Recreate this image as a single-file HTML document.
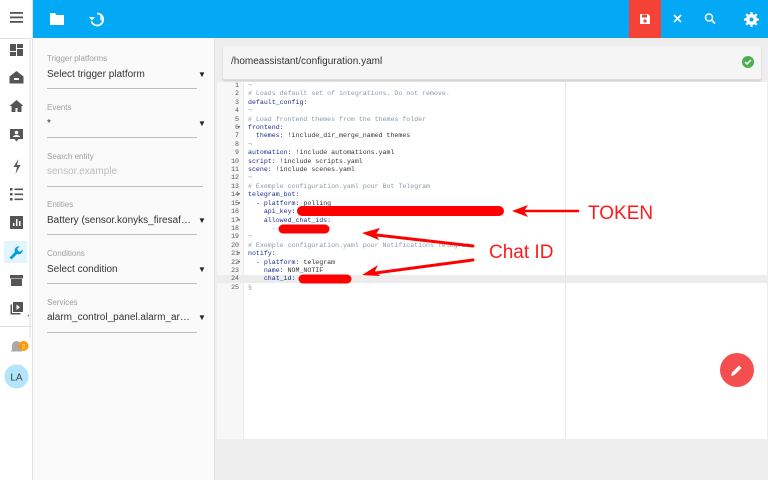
<!DOCTYPE html>
<html><head><style>
*{margin:0;padding:0;box-sizing:border-box}
body{width:768px;height:480px;overflow:hidden;background:#eeeeee;font-family:"Liberation Sans",sans-serif;position:relative}
.abs{position:absolute}
#side{left:0;top:0;width:33px;height:480px;background:#fff;border-right:1px solid #e0e0e0}
#hdr{left:33px;top:0;width:735px;height:38px;background:#03a9f4}
#left{left:33px;top:38px;width:182px;height:442px;background:#fafafa;border-right:1px solid #e4e4e4}
.lbl{position:absolute;left:47px;font-size:8px;color:#9e9e9e}
.val{position:absolute;left:47px;font-size:10px;color:#333;width:148px;white-space:nowrap;overflow:hidden;text-overflow:ellipsis}
.ul{position:absolute;left:47px;width:150px;height:1px;background:#bdbdbd}
.dd{position:absolute;left:198px;font-size:8px;color:#222}
#path{left:223px;top:46px;width:538px;height:34px;background:#f5f5f5;border-bottom:1px solid #ddd;box-shadow:0 1px 2px rgba(0,0,0,.15)}
#code{left:217px;top:82px;width:550px;height:357px;background:#fff}
#gut{left:217px;top:82px;width:27px;height:357px;background:#f7f7f7;border-right:1px solid #ececec}
.ln{position:absolute;font-family:"Liberation Mono",monospace;font-size:6.6px;line-height:8.4px;white-space:pre}
.c{color:#8a9aa8}.k{color:#1a2d8c}.v{color:#333}
</style></head><body>
<div id="side" class="abs"></div>
<div class="abs" style="left:0;top:38px;width:33px;height:1px;background:#e0e0e0"></div>
<svg class="abs" style="left:0;top:0" width="33" height="480" fill="#555">
<rect x="10" y="12" width="13" height="1.8"/><rect x="10" y="16.5" width="13" height="1.8"/><rect x="10" y="21" width="13" height="1.8"/>
<path d="M10 44h6v7h-6zM17 44h6v4h-6zM17 49h6v7h-6zM10 52h6v4h-6z"/>
<path d="M16.5 71l7 5.5v7h-14v-7z"/><rect x="14" y="78" width="5" height="2" fill="#fff"/>
<path d="M16.5 100l7 6h-2v6h-4v-4h-2v4h-4v-6h-2z"/>
<path d="M10 129h13v10h-4.5l-2 2.5-2-2.5h-4.5z"/><circle cx="16.5" cy="132.5" r="1.8" fill="#fff"/><path d="M13 137a3.5 2 0 0 1 7 0z" fill="#fff"/>
<path d="M18.5 159l-5 8h3.5l-1.5 7 5-9h-3.5z"/>
<path d="M10 188h2.5v2.5h-2.5zM14.5 188.5h8.5v1.6h-8.5zM10 193h2.5v2.5h-2.5zM14.5 193.5h8.5v1.6h-8.5zM10 198h2.5v2.5h-2.5zM14.5 198.5h8.5v1.6h-8.5z"/>
<path d="M10 216h13v13h-13z"/><path d="M13 226v-3h1.5v3zM16 226v-7h1.5v7zM19 226v-5h1.5v5z" fill="#fff"/>
<rect x="4" y="241" width="23" height="22" fill="#e1f5fe"/>
<path d="M11.5 259.5l5.5-5.5a4 4 0 0 0 5.5-4.5l-2.3 2.3-2.2-.8-.8-2.2 2.3-2.3a4 4 0 0 0-4.5 5.5l-5.5 5.5z" fill="#039be5"/>
<path d="M10 275h13v3.5h-13zM11 279h11v7h-11z"/>
<path d="M13 302h10v10h-10zM10.5 304.5v10h10v-1.5h-8.5v-8.5z"/><path d="M16.5 304.5v5.5l3.5-2.7z" fill="#fff"/>
<path d="M28 315l1.5 1.5 1.5-1.5" stroke="#555" stroke-width="1" fill="none"/>
<rect x="0" y="326" width="33" height="1" fill="#e0e0e0"/>
<path d="M16.5 341a4.5 4.5 0 0 1 4.5 4.5v4.5l1.5 1.5h-12l1.5-1.5v-4.5a4.5 4.5 0 0 1 4.5-4.5z" fill="#aaa"/>
<circle cx="23.5" cy="346" r="5" fill="#ff9800"/>
<text x="23.5" y="348.5" font-size="6" fill="#fff" text-anchor="middle" font-family="Liberation Sans">2</text>
<circle cx="16.5" cy="376.5" r="12" fill="#b3e5fc"/>
<text x="16.5" y="380.5" font-size="10" fill="#444" text-anchor="middle" font-family="Liberation Sans">LA</text>
</svg>
<div class="abs" style="left:29px;top:38px;width:2px;height:300px;background:#e8eef3"></div>
<div id="hdr" class="abs"></div>
<svg class="abs" style="left:33px;top:0" width="735" height="38" fill="#fff">
<path d="M17 13h5l1.5 2h7.5v10h-14z"/>
<path d="M64 13.5a6 6 0 1 1-5.5 8" stroke="#fff" stroke-width="1.8" fill="none"/><path d="M56 17l3 3.5 3-3.5z"/><path d="M68 15.5v4l2.5 1.5" stroke="#fff" stroke-width="1.3" fill="none"/>
<rect x="596" y="0" width="32" height="38" fill="#f44336"/>
<path d="M607 14h8l2 2v8h-10z"/><rect x="609" y="14.5" width="5" height="3" fill="#f44336"/><circle cx="612" cy="21" r="1.6" fill="#f44336"/>
<path d="M641 15l7 7M648 15l-7 7" stroke="#fff" stroke-width="1.6"/>
<circle cx="676" cy="17.5" r="3.5" stroke="#fff" stroke-width="1.5" fill="none"/><path d="M678.5 20l3.5 3.5" stroke="#fff" stroke-width="1.8"/>
<circle cx="718.5" cy="19.5" r="5.5"/>
<path d="M718.5 12v15M711 19.5h15M713.2 14.2l10.6 10.6M723.8 14.2l-10.6 10.6" stroke="#fff" stroke-width="2.2"/>
<circle cx="718.5" cy="19.5" r="2" fill="#03a9f4"/>
</svg>
<div id="left" class="abs"></div>
<div class="lbl" style="top:54px">Trigger platforms</div>
<div class="val" style="top:69px">Select trigger platform</div><div class="dd" style="top:70px">▼</div>
<div class="ul" style="top:88px"></div>
<div class="lbl" style="top:103px">Events</div>
<div class="val" style="top:118px">*</div><div class="dd" style="top:119px">▼</div>
<div class="ul" style="top:137px"></div>
<div class="lbl" style="top:152px">Search entity</div>
<div class="val" style="top:166px;color:#bbb">sensor.example</div>
<div class="ul" style="top:186px;width:156px"></div>
<div class="lbl" style="top:200px">Entities</div>
<div class="val" style="top:215px">Battery (sensor.konyks_firesafe_2_battery)</div><div class="dd" style="top:216px">▼</div>
<div class="ul" style="top:234px"></div>
<div class="lbl" style="top:249px">Conditions</div>
<div class="val" style="top:264px">Select condition</div><div class="dd" style="top:265px">▼</div>
<div class="ul" style="top:283px"></div>
<div class="lbl" style="top:298px">Services</div>
<div class="val" style="top:312px">alarm_control_panel.alarm_arm_away</div><div class="dd" style="top:313px">▼</div>
<div class="ul" style="top:332px"></div>
<div id="path" class="abs"></div>
<div class="abs" style="left:231px;top:56px;font-size:10px;color:#333">/homeassistant/configuration.yaml</div>
<svg class="abs" style="left:741px;top:55px" width="14" height="14"><circle cx="7" cy="7" r="6" fill="#4caf50"/><path d="M4 7l2 2 4-4" stroke="#fff" stroke-width="1.5" fill="none"/></svg>
<div id="code" class="abs"></div>
<div id="gut" class="abs"></div>
<div class="abs" style="left:217px;top:275px;width:551px;height:8px;background:#ececec"></div>
<div class="abs" style="left:565px;top:82px;width:1px;height:357px;background:#e6e6e6"></div>
<div class="ln" style="left:219px;top:82px;width:20px;text-align:right;color:#555">1
2
3
4
5
6
7
8
9
10
11
12
13
14
15
16
17
18
19
20
21
22
23
24
25</div>
<div class="ln" style="left:237px;top:82px;color:#777">




▾







▾
▾
 
▾



▾
▾</div>
<div class="ln" style="left:248px;top:82px"><span class="c">¬</span>
<span class="c"># Loads default set of integrations. Do not remove.</span>
<span class="k">default_config:</span>
<span class="c">¬</span>
<span class="c"># Load frontend themes from the themes folder</span>
<span class="k">frontend:</span>
<span class="k">  themes:</span> <span class="v">!include_dir_merge_named themes</span>
<span class="c">¬</span>
<span class="k">automation:</span> <span class="v">!include automations.yaml</span>
<span class="k">script:</span> <span class="v">!include scripts.yaml</span>
<span class="k">scene:</span> <span class="v">!include scenes.yaml</span>
<span class="c">¬</span>
<span class="c"># Exemple configuration.yaml pour Bot Telegram</span>
<span class="k">telegram_bot:</span>
<span class="k">  - platform:</span> <span class="v">polling</span>
<span class="k">    api_key:</span>
<span class="k">    allowed_chat_ids:</span>
<span class="c">      -</span>
<span class="c">¬</span>
<span class="c"># Exemple configuration.yaml pour Notifications Telegram</span>
<span class="k">notify:</span>
<span class="k">  - platform:</span> <span class="v">telegram</span>
<span class="k">    name:</span> <span class="v">NOM_NOTIF</span>
<span class="k">    chat_id:</span>
<span class="c">§</span></div>
<svg class="abs" style="left:0;top:0" width="768" height="480">
<g stroke="#ff0000" stroke-linecap="round" fill="none">
<path d="M302 211h197" stroke-width="10"/>
<path d="M283 229h42" stroke-width="9"/>
<path d="M303 279h44" stroke-width="9"/>
<path d="M578 211h-62" stroke-width="2.5"/>
<path d="M473 246l-105-12" stroke-width="3"/>
<path d="M473 260l-105 14" stroke-width="3"/>
</g>
<g fill="#ff0000">
<path d="M512 211l16-6-4 6 4 6z"/>
<path d="M362 233l18-5-4 6 3 6z"/>
<path d="M362 275l16-10-3 6 5 5z"/>
</g>
<text x="588" y="219" font-size="19" fill="#ff1a1a" font-family="Liberation Sans">TOKEN</text>
<text x="489" y="258" font-size="19" fill="#ff1a1a" font-family="Liberation Sans">Chat ID</text>
<circle cx="737" cy="370" r="17" fill="#f44e4e"/>
<path d="M731 376l1-3.5 7-7 2.5 2.5-7 7z" fill="#fff"/>
</svg>
</body></html>
